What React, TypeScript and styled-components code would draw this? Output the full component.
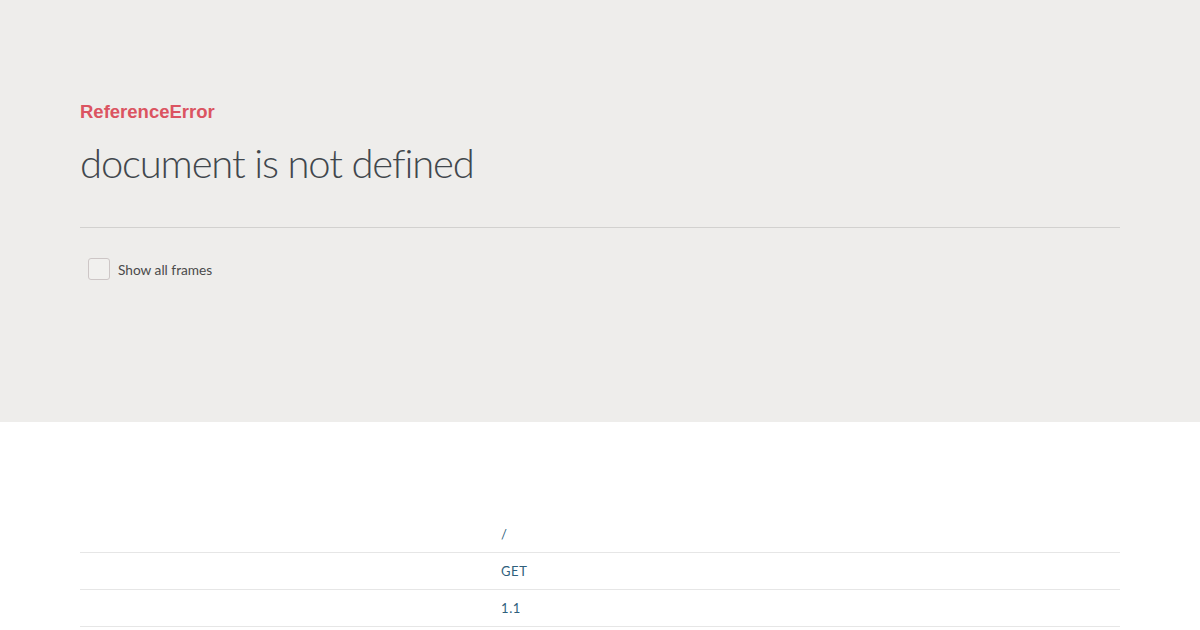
import React from 'react';
import styled, { createGlobalStyle } from 'styled-components';

const GlobalStyle = createGlobalStyle`
    html, body {
        margin: 0;
        padding: 0;
        background: #fff;
    }
    body {
        font-family: Lato, "Open Sans", sans-serif;
    }
`;

const ErrorPage = styled.section`
    background: #eeedeb;
    height: 422px;
    box-sizing: border-box;
    padding: 100px 80px 0;
`;

const ErrorName = styled.h2`
    margin: 0;
    font-family: "Liberation Sans", Arial, sans-serif;
    font-weight: 700;
    font-size: 18.5px;
    line-height: 24px;
    color: #db5461;
`;

const ErrorMessage = styled.h1`
    margin: 12px 0 0;
    font-family: Lato, sans-serif;
    font-weight: 300;
    font-size: 40px;
    line-height: 54px;
    letter-spacing: -1.15px;
    color: #41474d;
`;

const Divider = styled.hr`
    margin: 37px 0 0;
    border: 0;
    border-top: 1px solid #d2d1cf;
`;

const FrameToggle = styled.label`
    display: flex;
    align-items: center;
    gap: 8px;
    margin: 30px 0 0 8px;
    font-size: 13.7px;
    color: #4a4a4a;
    cursor: pointer;
`;

const Checkbox = styled.span`
    width: 20px;
    height: 20px;
    border: 1px solid #cdc6c6;
    border-radius: 3px;
    background: #f1f0ee;
`;

const RequestSection = styled.section`
    padding: 94px 80px 0;
`;

const Table = styled.table`
    width: 100%;
    border-collapse: collapse;
`;

const Row = styled.tr`
    border-bottom: 1px solid #e6e6e6;
`;

const KeyCell = styled.td`
    width: 40%;
    height: 36px;
    padding: 0;
`;

const ValueCell = styled.td`
    padding: 0 5px;
    font-size: 13px;
    letter-spacing: 0.6px;
    color: #2f5f7c;
`;

const rows = ['/', 'GET', '1.1'];

export default function App() {
    return (
        <>
            <GlobalStyle />
            <ErrorPage>
                <ErrorName>ReferenceError</ErrorName>
                <ErrorMessage>document is not defined</ErrorMessage>
                <Divider />
                <FrameToggle>
                    <Checkbox />
                    Show all frames
                </FrameToggle>
            </ErrorPage>
            <RequestSection>
                <Table>
                    <tbody>
                        {rows.map((value) => (
                            <Row key={value}>
                                <KeyCell />
                                <ValueCell>{value}</ValueCell>
                            </Row>
                        ))}
                    </tbody>
                </Table>
            </RequestSection>
        </>
    );
}
